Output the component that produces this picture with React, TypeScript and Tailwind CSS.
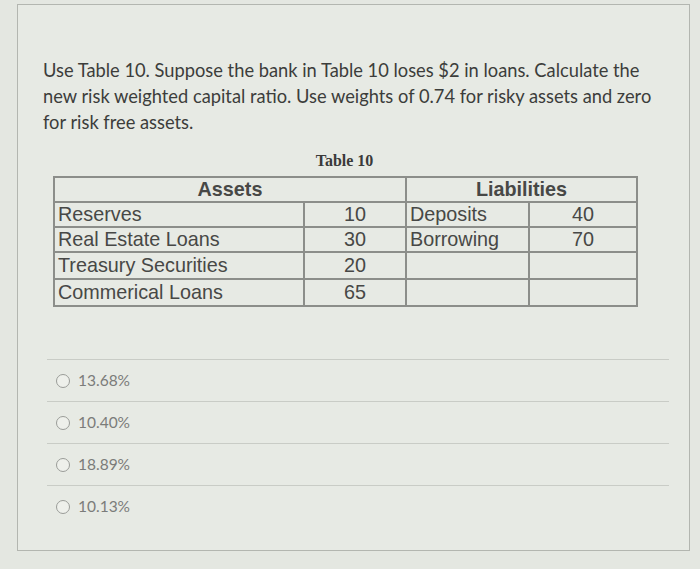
const assets = [
  { name: "Reserves", value: "10", liab: "Deposits", liabValue: "40", h: "h-[25px]" },
  { name: "Real Estate Loans", value: "30", liab: "Borrowing", liabValue: "70", h: "h-[25px]" },
  { name: "Treasury Securities", value: "20", liab: "", liabValue: "", h: "h-[27px]" },
  { name: "Commerical Loans", value: "65", liab: "", liabValue: "", h: "h-[27px]" },
];

const options = ["13.68%", "10.40%", "18.89%", "10.13%"];

export default function App() {
  return (
    <div className="h-[569px] w-[700px] overflow-hidden bg-[#e4e7e1] pl-[17px] pr-[10px] pt-[4px]">
      <div className="h-[547px] border border-[#b3b6b0] bg-[#e7eae4]">
        <p className="pl-[25px] pr-[25px] pt-[52px] font-['Lato',sans-serif] text-[18.3px] leading-[26px] text-[#3c3d3b]">
          Use Table 10. Suppose the bank in Table 10 loses $2 in loans. Calculate the new risk weighted capital ratio. Use weights of 0.74 for risky assets and zero for risk free assets.
        </p>

        <div className="mt-[16px] pl-[35px]">
          <div className="w-[583px] text-center font-['Liberation_Serif',serif] text-[16px] font-bold leading-[20px] text-[#3a3a3a]">
            Table 10
          </div>
          <table className="mt-[5px] border-collapse font-['Liberation_Sans',Arial,sans-serif] text-[19.8px] leading-none text-[#474846]">
            <thead>
              <tr className="h-[25px]">
                <th colSpan={2} className="border-2 border-[#8c8e8a] text-center font-bold">
                  Assets
                </th>
                <th colSpan={2} className="border-2 border-[#8c8e8a] text-center font-bold">
                  Liabilities
                </th>
              </tr>
            </thead>
            <tbody>
              {assets.map((row) => (
                <tr key={row.name} className={row.h}>
                  <td className="w-[250px] border-2 border-[#8c8e8a] px-[3px] text-left font-normal">{row.name}</td>
                  <td className="w-[102px] border-2 border-[#8c8e8a] text-center">{row.value}</td>
                  <td className="w-[123px] border-2 border-[#8c8e8a] px-[3px] text-left">{row.liab}</td>
                  <td className="w-[108px] border-2 border-[#8c8e8a] text-center">{row.liabValue}</td>
                </tr>
              ))}
            </tbody>
          </table>
        </div>

        <div className="mt-[52px] ml-[29px] mr-[20px] border-t border-[#c9ccc6]">
          {options.map((opt, i) => (
            <div
              key={opt}
              className={
                i < options.length - 1
                  ? "flex h-[42px] items-center gap-[8px] border-b border-[#c9ccc6] pl-[9px]"
                  : "flex h-[42px] items-center gap-[8px] pl-[9px]"
              }
            >
              <span className="h-[14px] w-[14px] rounded-full border border-[#9a9c98] bg-[#eef0eb]" />
              <span className="font-['Lato',sans-serif] text-[15.5px] text-[#7b7c7a]">{opt}</span>
            </div>
          ))}
        </div>
      </div>
    </div>
  );
}
